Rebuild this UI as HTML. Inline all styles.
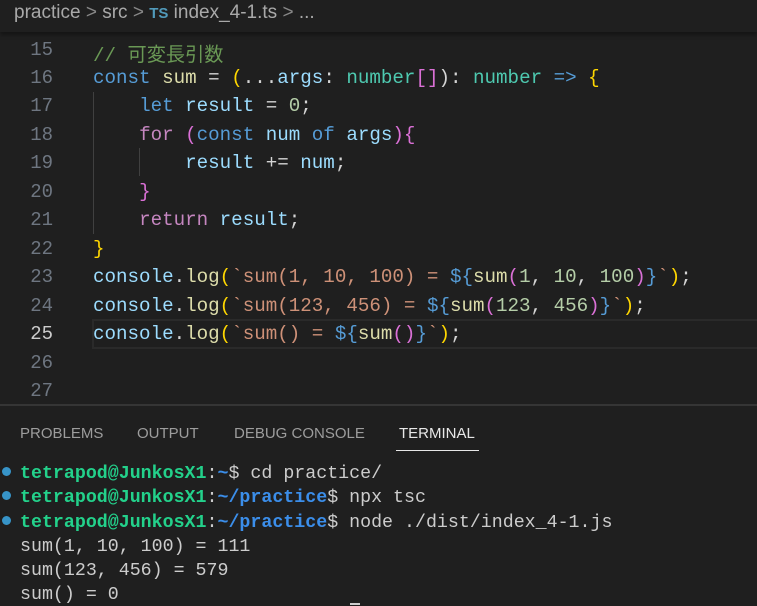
<!DOCTYPE html><html><head><meta charset="utf-8"><style>
body{margin:0;width:757px;height:606px;background:#1f1f1f;overflow:hidden;position:relative;font-family:"Liberation Mono",monospace}
.bc{position:absolute;top:0;left:0;right:0;height:32px;font-family:"Liberation Sans",sans-serif;font-size:19px;color:#a9a9a9;line-height:26px;padding-left:14px;box-shadow:0 3px 4px rgba(0,0,0,.35)}
.ln{position:absolute;left:0;width:53px;text-align:right;font-size:19px;color:#6e7681}
.cd{position:absolute;left:93px;font-size:19.2px;white-space:pre;color:#d4d4d4}
.k{color:#569cd6}.c{color:#c586c0}.v{color:#9cdcfe}.f{color:#dcdcaa}.t{color:#4ec9b0}.n{color:#b5cea8}.s{color:#ce9178}.cm{color:#6a9955;font-family:"Liberation Mono","Noto Sans CJK JP",monospace}
.y{color:#ffd700}.p{color:#da70d6}.b{color:#179fff}
.g{position:absolute;width:1px;background:#404040}
.tab{position:absolute;top:425px;font-family:"Liberation Sans",sans-serif;font-size:15px;color:#9d9d9d}
.tl{position:absolute;left:20px;font-size:18.3px;white-space:pre;color:#cccccc}
.gr{color:#23d18b;font-weight:bold}.bl{color:#3b8eea;font-weight:bold}
.dot{position:absolute;left:2px;width:9px;height:9px;border-radius:50%;background:#3794c8}
</style></head><body>
<div class="bc">practice <span style="color:#888">&gt;</span> src <span style="color:#888">&gt;</span> <span style="color:#519aba;font-weight:bold;font-size:15px">TS</span> index_4-1.ts <span style="color:#888">&gt;</span> ...</div>
<div style="position:absolute;left:92px;top:319px;right:0;height:26px;border:2px solid #2a2a2a;border-right:none"></div>
<div class="g" style="left:93px;top:92px;height:142px"></div>
<div class="g" style="left:139px;top:148px;height:28px"></div>
<div class="ln" style="top:39px">15</div><div class="cd" style="top:39px"><span class="cm">// 可変長引数</span></div>
<div class="ln" style="top:67px">16</div><div class="cd" style="top:67px"><span class="k">const</span> <span class="f">sum</span> = <span class="y">(</span>...<span class="v">args</span>: <span class="t">number</span><span class="p">[]</span>): <span class="t">number</span> <span class="k">=&gt;</span> <span class="y">{</span></div>
<div class="ln" style="top:95px">17</div><div class="cd" style="top:95px">    <span class="k">let</span> <span class="v">result</span> = <span class="n">0</span>;</div>
<div class="ln" style="top:124px">18</div><div class="cd" style="top:124px">    <span class="c">for</span> <span class="p">(</span><span class="k">const</span> <span class="v">num</span> <span class="k">of</span> <span class="v">args</span><span class="p">)</span><span class="p">{</span></div>
<div class="ln" style="top:152px">19</div><div class="cd" style="top:152px">        <span class="v">result</span> += <span class="v">num</span>;</div>
<div class="ln" style="top:181px">20</div><div class="cd" style="top:181px">    <span class="p">}</span></div>
<div class="ln" style="top:209px">21</div><div class="cd" style="top:209px">    <span class="c">return</span> <span class="v">result</span>;</div>
<div class="ln" style="top:238px">22</div><div class="cd" style="top:238px"><span class="y">}</span></div>
<div class="ln" style="top:266px">23</div><div class="cd" style="top:266px"><span class="v">console</span>.<span class="f">log</span><span class="y">(</span><span class="s">`sum(1, 10, 100) = </span><span class="k">${</span><span class="f">sum</span><span class="p">(</span><span class="n">1</span>, <span class="n">10</span>, <span class="n">100</span><span class="p">)</span><span class="k">}</span><span class="s">`</span><span class="y">)</span>;</div>
<div class="ln" style="top:295px">24</div><div class="cd" style="top:295px"><span class="v">console</span>.<span class="f">log</span><span class="y">(</span><span class="s">`sum(123, 456) = </span><span class="k">${</span><span class="f">sum</span><span class="p">(</span><span class="n">123</span>, <span class="n">456</span><span class="p">)</span><span class="k">}</span><span class="s">`</span><span class="y">)</span>;</div>
<div class="ln" style="top:323px;color:#ccc">25</div><div class="cd" style="top:323px"><span class="v">console</span>.<span class="f">log</span><span class="y">(</span><span class="s">`sum() = </span><span class="k">${</span><span class="f">sum</span><span class="p">()</span><span class="k">}</span><span class="s">`</span><span class="y">)</span>;</div>
<div class="ln" style="top:352px">26</div>
<div class="ln" style="top:380px">27</div>
<div style="position:absolute;left:0;right:0;top:404px;height:2px;background:#353535"></div>
<div class="tab" style="left:20px">PROBLEMS</div>
<div class="tab" style="left:137px">OUTPUT</div>
<div class="tab" style="left:234px">DEBUG CONSOLE</div>
<div class="tab" style="left:399px;color:#e7e7e7">TERMINAL</div>
<div style="position:absolute;left:396px;top:450px;width:83px;height:1px;background:#e7e7e7"></div>
<div class="dot" style="top:467px"></div><div class="tl" style="top:464px"><span class="gr">tetrapod@JunkosX1</span>:<span class="bl">~</span>$ cd practice/</div>
<div class="dot" style="top:491px"></div><div class="tl" style="top:488px"><span class="gr">tetrapod@JunkosX1</span>:<span class="bl">~/practice</span>$ npx tsc</div>
<div class="dot" style="top:516px"></div><div class="tl" style="top:513px"><span class="gr">tetrapod@JunkosX1</span>:<span class="bl">~/practice</span>$ node ./dist/index_4-1.js</div>
<div class="tl" style="top:537px">sum(1, 10, 100) = 111</div>
<div class="tl" style="top:561px">sum(123, 456) = 579</div>
<div class="tl" style="top:585px">sum() = 0</div>
<div style="position:absolute;left:350px;top:603px;width:10px;height:2px;background:#ccc"></div>
</body></html>
